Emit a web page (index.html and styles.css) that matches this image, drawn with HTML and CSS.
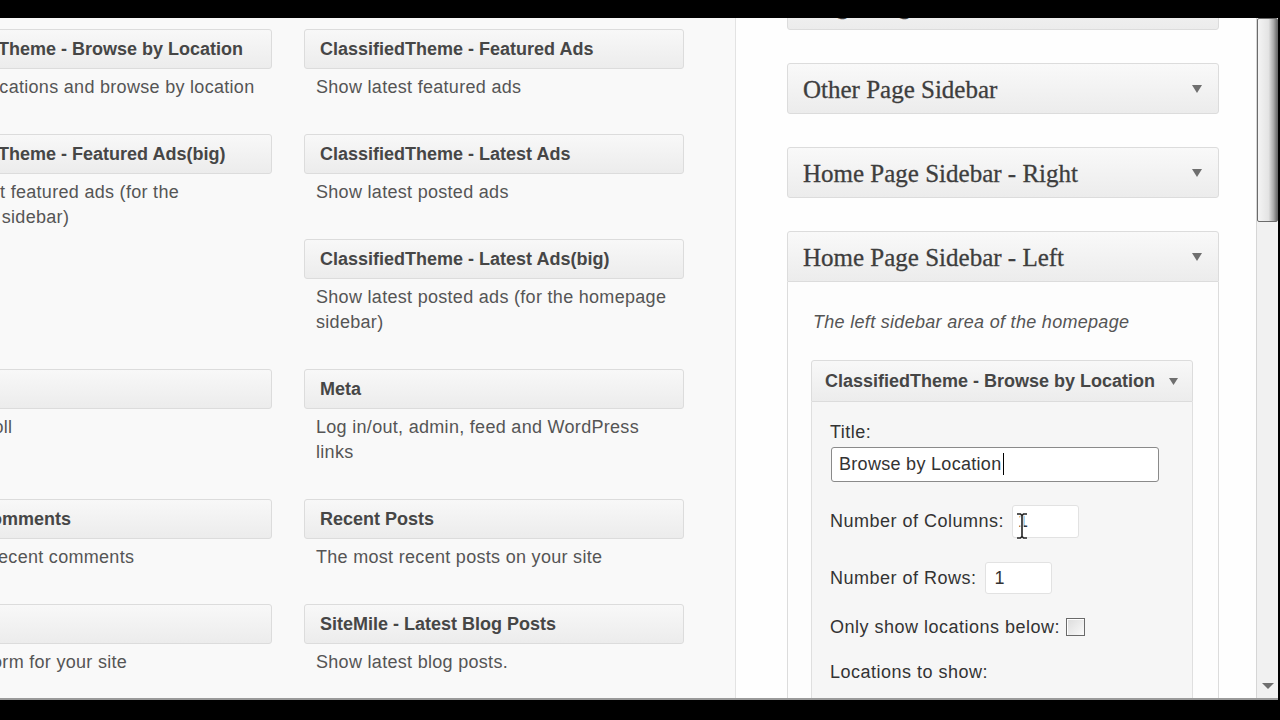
FILE: index.html
```html
<!DOCTYPE html>
<html lang="en">

<head>
    <meta charset="UTF-8">
    <meta name="viewport" content="width=device-width, initial-scale=1.0">
    <title>Widgets</title>
    <link rel="stylesheet" href="styles.css">
</head>

<body>
    <div class="screen">
        <div class="available">
            <div class="widget-grid">
                <div class="widget">
                    <div class="widget-top"><h4>ClassifiedTheme - Browse by Location</h4></div>
                    <p class="widget-desc">Show all locations and browse by location</p>
                </div>
                <div class="widget">
                    <div class="widget-top"><h4>ClassifiedTheme - Featured Ads</h4></div>
                    <p class="widget-desc">Show latest featured ads</p>
                </div>

                <div class="widget">
                    <div class="widget-top"><h4>ClassifiedTheme - Featured Ads(big)</h4></div>
                    <p class="widget-desc">Show latest featured ads (for the homepage sidebar)</p>
                </div>
                <div class="widget">
                    <div class="widget-top"><h4>ClassifiedTheme - Latest Ads</h4></div>
                    <p class="widget-desc">Show latest posted ads</p>
                </div>

                <div class="widget empty"></div>
                <div class="widget">
                    <div class="widget-top"><h4>ClassifiedTheme - Latest Ads(big)</h4></div>
                    <p class="widget-desc">Show latest posted ads (for the homepage sidebar)</p>
                </div>

                <div class="widget">
                    <div class="widget-top"><h4>Links</h4></div>
                    <p class="widget-desc">Your blogroll</p>
                </div>
                <div class="widget">
                    <div class="widget-top"><h4>Meta</h4></div>
                    <p class="widget-desc">Log in/out, admin, feed and WordPress links</p>
                </div>

                <div class="widget">
                    <div class="widget-top"><h4>Recent Comments</h4></div>
                    <p class="widget-desc">The most recent comments</p>
                </div>
                <div class="widget">
                    <div class="widget-top"><h4>Recent Posts</h4></div>
                    <p class="widget-desc">The most recent posts on your site</p>
                </div>

                <div class="widget">
                    <div class="widget-top"><h4>Search</h4></div>
                    <p class="widget-desc">A search form for your site</p>
                </div>
                <div class="widget">
                    <div class="widget-top"><h4>SiteMile - Latest Blog Posts</h4></div>
                    <p class="widget-desc">Show latest blog posts.</p>
                </div>
            </div>
        </div>

        <div class="sidebars">
            <div class="sidebar">
                <div class="sidebar-top">
                    <h3>Single Page Sidebar</h3>
                    <svg class="arrow" width="10" height="8" viewBox="0 0 10 8"><path d="M0 0H10L5 8Z" /></svg>
                </div>
            </div>
            <div class="sidebar">
                <div class="sidebar-top">
                    <h3>Other Page Sidebar</h3>
                    <svg class="arrow" width="10" height="8" viewBox="0 0 10 8"><path d="M0 0H10L5 8Z" /></svg>
                </div>
            </div>
            <div class="sidebar">
                <div class="sidebar-top">
                    <h3>Home Page Sidebar - Right</h3>
                    <svg class="arrow" width="10" height="8" viewBox="0 0 10 8"><path d="M0 0H10L5 8Z" /></svg>
                </div>
            </div>
            <div class="sidebar open">
                <div class="sidebar-top">
                    <h3>Home Page Sidebar - Left</h3>
                    <svg class="arrow" width="10" height="8" viewBox="0 0 10 8"><path d="M0 0H10L5 8Z" /></svg>
                </div>
                <div class="sidebar-body">
                    <p class="sidebar-desc">The left sidebar area of the homepage</p>

                    <div class="widget editing">
                        <div class="widget-top">
                            <h4>ClassifiedTheme - Browse by Location</h4>
                            <svg class="arrow" width="9" height="7" viewBox="0 0 9 7"><path d="M0 0H9L4.5 7Z" /></svg>
                        </div>
                        <div class="widget-inside">
                            <div class="field-label">Title:</div>
                            <div class="text-field">Browse by Location<span class="caret"></span></div>

                            <div class="field-row columns">
                                <span>Number of Columns:</span>
                                <span class="num-field">
                                    1
                                    <!-- mouse pointer sitting over the field -->
                                    <svg class="ibeam" width="14" height="28" viewBox="0 0 14 28">
                                        <path d="M2 2H5.5L7 3.5L8.5 2H12M7 3.5V24.5M2 26H5.5L7 24.5L8.5 26H12" fill="none" stroke="#fff" stroke-width="3.5" />
                                        <path d="M2 2H5.5L7 3.5L8.5 2H12M7 3.5V24.5M2 26H5.5L7 24.5L8.5 26H12" fill="none" stroke="#222" stroke-width="1.6" />
                                    </svg>
                                </span>
                            </div>
                            <div class="field-row rows">
                                <span>Number of Rows:</span>
                                <span class="num-field">1</span>
                            </div>
                            <div class="field-row check">
                                <span>Only show locations below:</span>
                                <span class="checkbox"></span>
                            </div>
                            <div class="field-label locations">Locations to show:</div>
                        </div>
                    </div>
                </div>
            </div>
        </div>

        <div class="scrollbar">
            <div class="thumb"></div>
            <svg class="scroll-down" width="12" height="7" viewBox="0 0 12 7"><path d="M0 0H12L6 6Z" /></svg>
        </div>
    </div>
</body>

</html>
```

FILE: styles.css
```css
html,
body {
    margin: 0;
    padding: 0;
    height: 100%;
}

body {
    background-color: #000;
    font-family: "Liberation Sans", Arial, sans-serif;
    color: #333;
}

.screen {
    margin-top: 18px;
    width: 1278px;
    height: 680px;
    border-bottom: 2px solid #9a9a9a;
    background-color: #f9f9f9;
    display: flex;
    overflow: hidden;
}

/* available widgets (left part, scrolled sideways) */
.available {
    flex: none;
    width: 735px;
    border-right: 1px solid #e3e3e3;
    overflow: hidden;
}

.widget-grid {
    display: grid;
    grid-template-columns: 375px 380px;
    grid-template-rows: 105px 105px 130px 130px 105px 105px;
    column-gap: 32px;
    margin: 11px 0 0 -103px;
}

.widget-top {
    height: 38px;
    padding: 0 15px;
    border: 1px solid #dcdcdc;
    border-radius: 3px;
    background: linear-gradient(#f8f8f8, #ececec);
    display: flex;
    align-items: center;
    justify-content: space-between;
}

.widget-top h4 {
    margin: 0;
    font-size: 18px;
    font-weight: bold;
    color: #464646;
    white-space: nowrap;
}

.widget-desc {
    margin: 6px 8px 0 12px;
    font-size: 18px;
    line-height: 25px;
    letter-spacing: 0.3px;
    color: #555;
}

/* sidebars (right part) */
.sidebars {
    flex: 1;
    padding: 0 37px 0 51px;
    background-color: #fefefe;
    overflow: hidden;
}

.sidebar {
    margin-bottom: 33px;
}

.sidebar:first-child {
    margin-top: -39px;
}

.sidebar-top {
    height: 49px;
    padding: 0 16px 0 15px;
    border: 1px solid #dcdcdc;
    border-radius: 3px;
    background: linear-gradient(#f9f9f9, #ececec);
    display: flex;
    align-items: center;
    justify-content: space-between;
}

.sidebar-top h3 {
    margin: 3px 0 0;
    font-family: "Liberation Serif", "Times New Roman", serif;
    font-size: 25px;
    font-weight: normal;
    color: #3e3e3e;
    -webkit-text-stroke: 0.3px #3e3e3e;
}

.arrow path,
.scroll-down path {
    fill: #6f6f6f;
}

.open .sidebar-top {
    border-radius: 3px 3px 0 0;
}

.sidebar-body {
    height: 600px;
    padding: 28px 25px 0 23px;
    border: 1px solid #dcdcdc;
    border-top: none;
    background-color: #fdfdfd;
}

.sidebar-desc {
    margin: 0 0 26px 2px;
    font-size: 18px;
    line-height: 24px;
    font-style: italic;
    letter-spacing: 0.3px;
    color: #555;
}

.editing .widget-top {
    height: 40px;
    padding: 0 14px 0 13px;
    border-radius: 3px 3px 0 0;
}

.widget-inside {
    height: 500px;
    padding: 18px 18px 0;
    border: 1px solid #dfdfdf;
    border-top: none;
    background-color: #f6f6f6;
    font-size: 18px;
    letter-spacing: 0.5px;
    color: #333;
}

.field-label {
    line-height: 24px;
}

.text-field {
    margin: 3px 0 0 1px;
    width: 319px;
    height: 33px;
    padding-left: 7px;
    border: 1px solid #8a8a8a;
    border-radius: 3px;
    background-color: #fff;
    line-height: 33px;
    letter-spacing: 0.3px;
}

.caret {
    display: inline-block;
    width: 1px;
    height: 22px;
    margin-left: 1px;
    background-color: #000;
    vertical-align: -5px;
}

.field-row {
    display: flex;
    align-items: center;
    gap: 8px;
}

.num-field {
    position: relative;
    width: 56px;
    padding-left: 9px;
    border: 1px solid #e2e2e2;
    border-radius: 3px;
    background-color: #fff;
}

.columns {
    margin-top: 23px;
}

.columns .num-field {
    height: 31px;
    line-height: 31px;
    padding-left: 5px;
    width: 60px;
}

.rows {
    margin-top: 24px;
}

.rows .num-field {
    height: 30px;
    line-height: 30px;
}

.ibeam {
    position: absolute;
    left: 2px;
    top: 6px;
}

.check {
    margin-top: 21px;
    height: 24px;
    gap: 6px;
}

.checkbox {
    width: 17px;
    height: 16px;
    border: 1px solid #6a6a6a;
    background: linear-gradient(135deg, #dcdcdc, #fafafa);
    box-shadow: inset 1px 1px 0 #fff;
}

.locations {
    margin-top: 21px;
}

/* window scrollbar */
.scrollbar {
    flex: none;
    width: 21px;
    border-left: 1px solid #d6d6d6;
    background-color: #f1f1f1;
    display: flex;
    flex-direction: column;
    align-items: center;
}

.thumb {
    width: 19px;
    height: 202px;
    border: 1px solid #6b6b6b;
    border-radius: 2px;
    background: linear-gradient(to right, #f4f4f4 0%, #e4e4e4 55%, #a9a9a9 82%, #6e6e6e 100%);
}

.scroll-down {
    margin-top: auto;
    margin-bottom: 8px;
}
```
